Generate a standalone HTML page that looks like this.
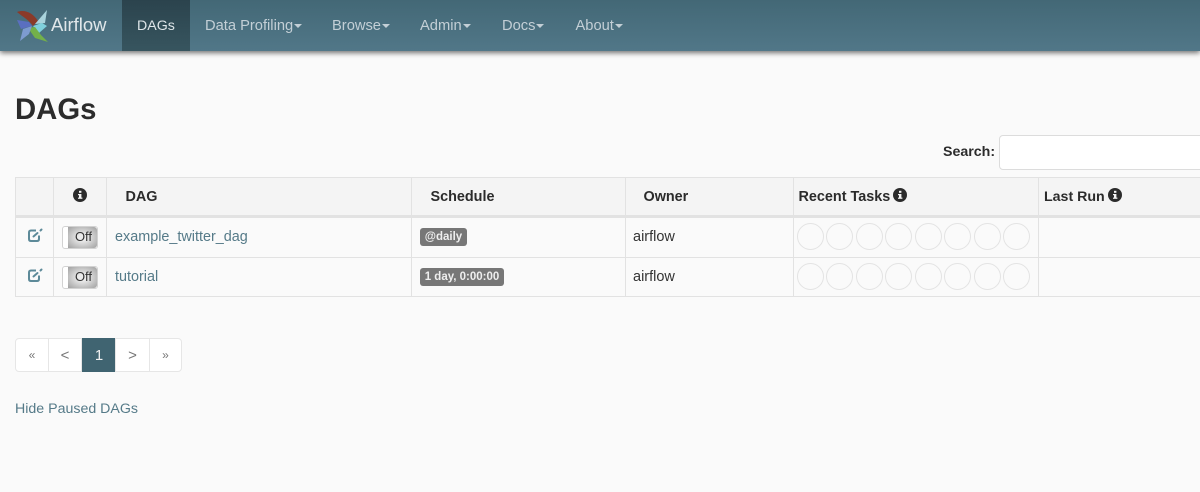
<!DOCTYPE html>
<html>
<head>
<meta charset="utf-8">
<style>
html,body{margin:0;padding:0;width:1200px;height:492px;overflow:hidden;background:#fafafa;font-family:"Liberation Sans",sans-serif;color:#333}
#wrap{position:absolute;left:0;top:0;width:1200px;height:492px;filter:blur(.35px)}
.a{position:absolute;white-space:nowrap}
#nav{left:0;top:0;width:1200px;height:51px;background:linear-gradient(#436876,#517788);box-shadow:0 2px 5px rgba(0,0,0,.55)}
#active{left:122px;top:0;width:68px;height:51px;background:linear-gradient(#2b434d,#37555f)}
.n{top:17px;font-size:14.7px;line-height:18px;color:#c3cfd6}
.n i{display:inline-block;width:0;height:0;border-left:4px solid transparent;border-right:4px solid transparent;border-top:4px solid #c3cfd6;margin-left:1px;vertical-align:2px}
.line{background:#e2e2e2}
.th{top:188px;font-size:14.4px;line-height:18px;font-weight:bold;color:#2b2b2b}
.td{font-size:14.5px;line-height:18px;color:#333}
.link{color:#557a88}
.tog{left:62px;width:34px;height:21px;border:1px solid #d2d2d2;border-radius:3px;background:#fff}
.tog b{position:absolute;left:5px;top:0;width:29px;height:21px;border-radius:0 3px 3px 0;background:radial-gradient(ellipse at center,#ececec 20%,#a0a0a0 100%);font-weight:normal;font-size:13px;line-height:20px;text-align:center;color:#333;text-indent:2px}
.lab{left:420px;height:18px;border-radius:3px;background:#777;color:#eee;font-weight:bold;font-size:11.5px;line-height:18px;text-align:center}
.c{width:25px;height:25px;border:1px solid #e3e3e3;border-radius:50%}
.pg{top:338px;height:34px;background:#fff;border:1px solid #e6e6e6;box-sizing:border-box;text-align:center;line-height:33px;color:#777;font-size:14px}
</style>
</head>
<body>
<div id="wrap">
<div class="a" id="nav"></div>
<div class="a" id="active"></div>
<svg class="a" style="left:15px;top:8px" width="36" height="36" viewBox="0 0 36 36">
<path d="M2 4 C10 1 18 5 23 13 L18 18 C14 12 8 9 2 4Z" fill="#8a3a2a"/>
<path d="M32 2 L30 15 L20 16 Z" fill="#a9d3dc"/>
<path d="M32 18 L24 25 L18 18 L27 15Z" fill="#7fd0dc"/>
<path d="M33 34 L20 30 L13 20 L20 19 L26 27Z" fill="#73b04a"/>
<path d="M5 33 L8 21 L17 18 L14 26Z" fill="#7d9bd0"/>
<path d="M2 12 L14 14 L17 18 L6 21Z" fill="#5a6fc0"/>
</svg>
<div class="a" style="left:51px;top:14px;font-size:18.5px;line-height:22px;color:#e0e7ea">Airflow</div>
<div class="a n" style="left:137px;color:#dfe6e9;font-size:14.2px">DAGs</div>
<div class="a n" style="left:205px">Data Profiling<i></i></div>
<div class="a n" style="left:332px">Browse<i></i></div>
<div class="a n" style="left:420px">Admin<i></i></div>
<div class="a n" style="left:502px">Docs<i></i></div>
<div class="a n" style="left:575.500px">About<i></i></div>

<div class="a" style="left:15px;top:92px;font-size:29.3px;line-height:36px;font-weight:bold;color:#2b2b2b">DAGs</div>

<div class="a" style="left:943px;top:143px;font-size:14.2px;line-height:18px;font-weight:bold;color:#2b2b2b">Search:</div>
<div class="a" style="left:999px;top:135px;width:210px;height:33px;background:#fff;border:1px solid #dcdcdc;border-radius:4px"></div>

<div class="a" style="left:15px;top:177px;width:1185px;height:38px;background:#f4f4f4"></div>
<div class="a line" style="left:15px;top:177px;width:1185px;height:1px"></div>
<div class="a" style="left:15px;top:215px;width:1185px;height:3px;background:#e2e2e2"></div>
<div class="a line" style="left:15px;top:257px;width:1185px;height:1px"></div>
<div class="a line" style="left:15px;top:296px;width:1185px;height:1px"></div>
<div class="a line" style="left:15px;top:177px;width:1px;height:120px"></div>
<div class="a line" style="left:53px;top:177px;width:1px;height:120px"></div>
<div class="a line" style="left:106px;top:177px;width:1px;height:120px"></div>
<div class="a line" style="left:411px;top:177px;width:1px;height:120px"></div>
<div class="a line" style="left:625px;top:177px;width:1px;height:120px"></div>
<div class="a line" style="left:793px;top:177px;width:1px;height:120px"></div>
<div class="a line" style="left:1038px;top:177px;width:1px;height:120px"></div>

<svg class="a" style="left:73px;top:188px" width="14" height="14" viewBox="0 0 14 14"><circle cx="7" cy="7" r="7" fill="#2b2b2b"/><rect x="6" y="6" width="2.4" height="4.5" fill="#f5f5f5"/><rect x="5" y="6" width="2" height="1.2" fill="#f5f5f5"/><rect x="5" y="9.6" width="4.4" height="1.2" fill="#f5f5f5"/><rect x="6" y="2.8" width="2.4" height="2" fill="#f5f5f5"/></svg>
<div class="a th" style="left:125.500px">DAG</div>
<div class="a th" style="left:430.500px">Schedule</div>
<div class="a th" style="left:643.500px">Owner</div>
<div class="a th" style="left:798.500px">Recent Tasks</div>
<svg class="a" style="left:893px;top:188px" width="14" height="14" viewBox="0 0 14 14"><circle cx="7" cy="7" r="7" fill="#2b2b2b"/><rect x="6" y="6" width="2.4" height="4.5" fill="#f5f5f5"/><rect x="5" y="6" width="2" height="1.2" fill="#f5f5f5"/><rect x="5" y="9.6" width="4.4" height="1.2" fill="#f5f5f5"/><rect x="6" y="2.8" width="2.4" height="2" fill="#f5f5f5"/></svg>
<div class="a th" style="left:1044px;font-size:14.2px">Last Run</div>
<svg class="a" style="left:1108px;top:188px" width="14" height="14" viewBox="0 0 14 14"><circle cx="7" cy="7" r="7" fill="#2b2b2b"/><rect x="6" y="6" width="2.4" height="4.5" fill="#f5f5f5"/><rect x="5" y="6" width="2" height="1.2" fill="#f5f5f5"/><rect x="5" y="9.6" width="4.4" height="1.2" fill="#f5f5f5"/><rect x="6" y="2.8" width="2.4" height="2" fill="#f5f5f5"/></svg>

<svg class="a" style="left:27px;top:228px" width="16" height="15" viewBox="0 0 16 15" fill="none" stroke="#5d8a99" stroke-width="2"><path d="M9 2.500H4Q2 2.500 2 4.500V11Q2 13 4 13H10Q12 13 12 11V7.500"/><path d="M6.500 8.500L10.500 5M13.500 2.500L14.500 1.500" stroke-linecap="round"/></svg>
<svg class="a" style="left:27px;top:268px" width="16" height="15" viewBox="0 0 16 15" fill="none" stroke="#5d8a99" stroke-width="2"><path d="M9 2.500H4Q2 2.500 2 4.500V11Q2 13 4 13H10Q12 13 12 11V7.500"/><path d="M6.500 8.500L10.500 5M13.500 2.500L14.500 1.500" stroke-linecap="round"/></svg>

<div class="a tog" style="top:226px"><b>Off</b></div>
<div class="a tog" style="top:266px"><b>Off</b></div>

<div class="a td link" style="left:115px;top:228px;font-size:14.4px">example_twitter_dag</div>
<div class="a td link" style="left:115px;top:268px;font-size:14.4px">tutorial</div>
<div class="a lab" style="top:228px;width:47px">@daily</div>
<div class="a lab" style="top:268px;width:84px">1 day, 0:00:00</div>
<div class="a td" style="left:633px;top:268px;font-size:14.5px">airflow</div>
<div class="a td" style="left:633px;top:228px;font-size:14.5px">airflow</div>

<div class="a c" style="left:797px;top:223px"></div><div class="a c" style="left:826px;top:223px"></div><div class="a c" style="left:856px;top:223px"></div><div class="a c" style="left:885px;top:223px"></div><div class="a c" style="left:915px;top:223px"></div><div class="a c" style="left:944px;top:223px"></div><div class="a c" style="left:974px;top:223px"></div><div class="a c" style="left:1003px;top:223px"></div>
<div class="a c" style="left:797px;top:263px"></div><div class="a c" style="left:826px;top:263px"></div><div class="a c" style="left:856px;top:263px"></div><div class="a c" style="left:885px;top:263px"></div><div class="a c" style="left:915px;top:263px"></div><div class="a c" style="left:944px;top:263px"></div><div class="a c" style="left:974px;top:263px"></div><div class="a c" style="left:1003px;top:263px"></div>

<div class="a pg" style="left:15px;width:34px;border-radius:4px 0 0 4px;font-size:12px">«</div>
<div class="a pg" style="left:48px;width:34px;font-size:15px">&lt;</div>
<div class="a pg" style="left:82px;width:34px;background:#406471;border-color:#406471;color:#f0f0f0;font-size:15px">1</div>
<div class="a pg" style="left:115px;width:35px;font-size:15px">&gt;</div>
<div class="a pg" style="left:149px;width:33px;border-radius:0 4px 4px 0;font-size:12px">»</div>

<div class="a td link" style="left:15px;top:400px;font-size:14.2px">Hide Paused DAGs</div>
</div>
</body>
</html>
